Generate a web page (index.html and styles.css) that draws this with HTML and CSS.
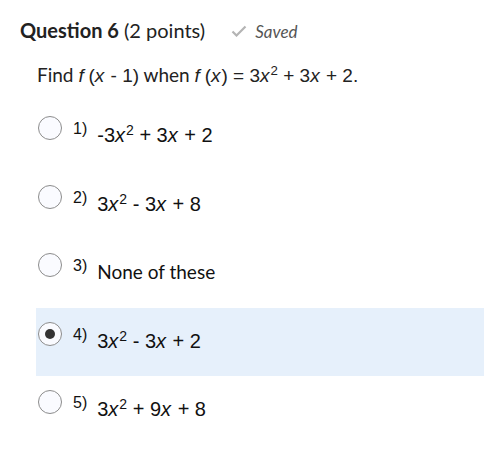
FILE: index.html
```html
<!DOCTYPE html>
<html>
<head>
<meta charset="utf-8">
<link rel="stylesheet" href="styles.css">
</head>
<body>
<div class="question">
  <div class="header">
    <span class="title"><b>Question 6</b> (2 points)</span>
    <span class="saved">
      <svg class="check" width="16" height="12" viewBox="0 0 16 12"><polyline points="1.5,6.5 5.5,10.5 14.5,1.5" fill="none" stroke="#b4b4b4" stroke-width="2.2"/></svg>
      <i>Saved</i>
    </span>
  </div>
  <div class="prompt">Find <span class="m"><i>f</i>&#8201;(<i>x</i> - 1)</span> when <span class="m"><i>f</i>&#8201;(<i>x</i>) = 3<i>x</i><sup>2</sup> + 3<i>x</i> + 2.</span></div>
  <div class="options">
    <div class="opt"><span class="radio"></span><span class="num">1)</span><span class="m ans">-3<i>x</i><sup>2</sup> + 3<i>x</i> + 2</span></div>
    <div class="opt"><span class="radio"></span><span class="num">2)</span><span class="m ans">3<i>x</i><sup>2</sup> - 3<i>x</i> + 8</span></div>
    <div class="opt"><span class="radio"></span><span class="num">3)</span><span class="ans txt">None of these</span></div>
    <div class="opt sel"><span class="radio on"></span><span class="num">4)</span><span class="m ans">3<i>x</i><sup>2</sup> - 3<i>x</i> + 2</span></div>
    <div class="opt"><span class="radio"></span><span class="num">5)</span><span class="m ans">3<i>x</i><sup>2</sup> + 9<i>x</i> + 8</span></div>
  </div>
</div>
</body>
</html>
```
FILE: styles.css
```css
html, body { margin: 0; padding: 0; background: #fff; }
body { font-family: Lato, "Open Sans", sans-serif; color: #222; }
.question { padding: 18px 0 0 20px; }
.header { display: flex; align-items: baseline; font-size: 20px; line-height: 24px; }
.title b { font-weight: 700; }
.saved { display: flex; align-items: center; margin-left: 26px; font-size: 17px; color: #555; }
.check { margin-right: 8px; position: relative; top: -1px; }
.prompt { margin: 20px 0 0 17px; font-size: 19px; line-height: 22px; }
.m { font-family: "Liberation Sans", Arial, sans-serif; }
.m i { padding-right: 1px; }
.m sup { font-size: 0.7em; vertical-align: 0; position: relative; top: -0.5em; }
.options { margin: 13px 0 0 16px; }
.opt { display: flex; align-items: flex-start; height: 68.5px; padding: 14px 0 0 2px; box-sizing: border-box; }
.opt.sel { background: #e6f0fb; }
.radio { width: 22px; height: 22px; border: 1px solid #8c8c8c; border-radius: 50%; background: #fafbff; flex: none; box-sizing: content-box; position: relative; }
.radio.on::after { content: ""; position: absolute; left: 6px; top: 6px; width: 10px; height: 10px; border-radius: 50%; background: #333; }
.num { font-family: "Liberation Sans", Arial, sans-serif; font-size: 16px; line-height: 18px; margin: 4px 0 0 11px; color: #111; }
.ans { font-size: 20px; line-height: 22px; margin: 8px 0 0 10px; color: #111; }
.ans.txt { font-family: Lato, sans-serif; font-size: 19px; margin-top: 8px; }
```
